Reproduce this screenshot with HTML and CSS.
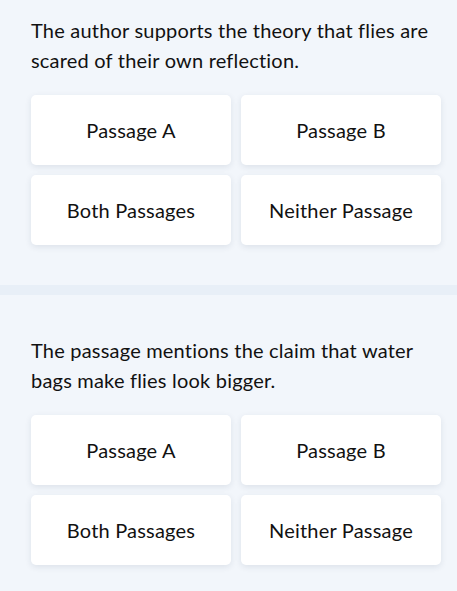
FILE: index.html
```html
<!DOCTYPE html>
<html lang="en">
<head>
    <meta charset="UTF-8">
    <meta name="viewport" content="width=device-width, initial-scale=1.0">
    <title>Passage Questions</title>
    <link rel="stylesheet" href="styles.css">
</head>
<body>

    <section class="question first">
        <p class="prompt">The author supports the theory that flies are scared of their own reflection.</p>
        <div class="choices">
            <button class="choice">Passage A</button>
            <button class="choice">Passage B</button>
            <button class="choice">Both Passages</button>
            <button class="choice">Neither Passage</button>
        </div>
    </section>

    <div class="divider"></div>

    <section class="question">
        <p class="prompt">The passage mentions the claim that water bags make flies look bigger.</p>
        <div class="choices">
            <button class="choice">Passage A</button>
            <button class="choice">Passage B</button>
            <button class="choice">Both Passages</button>
            <button class="choice">Neither Passage</button>
        </div>
    </section>

</body>
</html>
```

FILE: styles.css
```css
body {
    font-family: 'Lato', sans-serif;
    margin: 0;
    background-color: #f2f6fb;
    color: #111;
}

.question {
    padding: 40px 16px 40px 31px;
}

.question.first {
    padding-top: 15px;
}

.prompt {
    margin: 0 0 20px;
    font-size: 20px;
    line-height: 30px;
    letter-spacing: 0.2px;
}

.choices {
    display: grid;
    grid-template-columns: 200px 200px;
    gap: 10px;
}

.choice {
    height: 70px;
    border: none;
    border-radius: 5px;
    background-color: #fff;
    box-shadow: 0 2px 6px rgba(30, 50, 80, 0.1);
    font-family: inherit;
    font-size: 20px;
    letter-spacing: 0.2px;
    color: #111;
    cursor: pointer;
}

.choice:hover {
    background-color: #f8fafd;
}

.divider {
    height: 10px;
    background-color: #e8eff7;
}
```
